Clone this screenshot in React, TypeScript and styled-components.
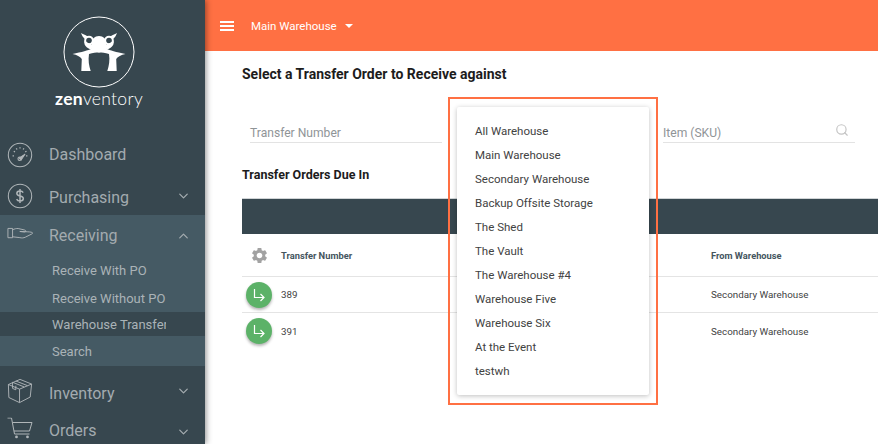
import React from "react";
import styled, { createGlobalStyle } from "styled-components";
import { ChevronDown, ChevronUp, Search } from "lucide-react";
import { MdSettings } from "react-icons/md";

const GlobalStyle = createGlobalStyle`
  html, body { margin: 0; height: 100%; overflow: hidden; background: #fff; }
  body { font-family: Roboto, "Liberation Sans", sans-serif; }
  * { box-sizing: border-box; }
`;

const Page = styled.div`
  position: relative;
  display: flex;
  width: 878px;
  height: 444px;
  overflow: hidden;
`;

const Sidebar = styled.aside`
  flex: 0 0 205px;
  height: 444px;
  background: #37474f;
  box-shadow: 1px 0 6px rgba(0, 0, 0, 0.45);
  z-index: 2;
  overflow: hidden;
`;

const Brand = styled.div`
  height: 133px;
  padding: 16px 7px 0 0;
  display: flex;
  flex-direction: column;
  align-items: center;
  color: #fff;
`;

const Wordmark = styled.div`
  font-family: Lato, sans-serif;
  font-size: 17.5px;
  line-height: 22px;
  font-weight: 300;
  letter-spacing: 0.3px;
  b { font-weight: 700; }
`;

const NavRow = styled.div<{ $h: number; $shift?: number }>`
  height: ${(p) => p.$h}px;
  display: flex;
  align-items: center;
  position: relative;
  padding-left: 49px;
  padding-top: ${(p) => Math.max(p.$shift || 0, 0)}px;
  padding-bottom: ${(p) => Math.max(-(p.$shift || 0), 0)}px;
  color: #a3abaf;
  font-size: 16px;
`;

const NavIcon = styled.span<{ $dy?: number }>`
  position: absolute;
  left: 7px;
  top: calc(50% + ${(p) => p.$dy || 0}px);
  transform: translateY(-50%);
  display: flex;
  color: #b0b6b9;
`;

const Chevron = styled.span`
  position: absolute;
  left: 176px;
  top: 50%;
  transform: translateY(-50%);
  display: flex;
  color: #a3abaf;
`;

const Group = styled.div`
  background: #455a64;
`;

const SubItem = styled.div<{ $active?: boolean; $h: number }>`
  height: ${(p) => p.$h}px;
  display: flex;
  align-items: center;
  padding-left: 52px;
  font-size: 13px;
  white-space: nowrap;
  overflow: hidden;
  width: 205px;
  color: #aab3b7;
  background: ${(p) => (p.$active ? "#37474f" : "transparent")};
`;

const Clip = styled.span`
  display: block;
  max-width: 114px;
  overflow: hidden;
`;

const Main = styled.main`
  flex: 1;
  min-width: 0;
  display: flex;
  flex-direction: column;
`;

const TopBar = styled.header`
  height: 51px;
  background: #ff7043;
  display: flex;
  align-items: center;
  padding-left: 15px;
  color: #fff;
  font-size: 11.5px;
`;

const Burger = styled.span`
  width: 14px;
  height: 10px;
  margin-right: 17px;
  border-top: 2px solid #fff;
  border-bottom: 2px solid #fff;
  position: relative;
  &::after {
    content: "";
    position: absolute;
    left: 0;
    right: 0;
    top: 2px;
    height: 2px;
    background: #fff;
  }
`;

const Caret = styled.span`
  margin-left: 8px;
  width: 0;
  height: 0;
  border-left: 4px solid transparent;
  border-right: 4px solid transparent;
  border-top: 4px solid #fff;
`;

const Content = styled.div`
  padding: 15px 0 0 37px;
`;

const Title = styled.h1`
  margin: 0;
  font-size: 14px;
  line-height: 17px;
  font-weight: 700;
  color: #1c1c1c;
`;

const Filters = styled.div`
  display: flex;
  justify-content: space-between;
  margin-top: 33px;
  padding: 0 23px 0 8px;
`;

const Field = styled.div`
  position: relative;
  width: 192px;
  height: 27px;
  padding-top: 9px;
  border-bottom: 1px solid #e3e3e3;
  font-size: 12.1px;
  line-height: 17px;
  color: #8f9497;
`;

const FieldIcon = styled.span`
  position: absolute;
  right: 6px;
  top: 7px;
  display: flex;
  color: #c4c4c4;
`;

const Subtitle = styled.h2`
  margin: 24px 0 0;
  font-size: 12.5px;
  line-height: 16px;
  font-weight: 700;
  color: #1c1c1c;
`;

const TableBar = styled.div`
  height: 36px;
  margin-top: 15px;
  background: #37474f;
  border-top: 1px solid #d0d4d6;
`;

const Row = styled.div<{ $h: number; $last?: boolean }>`
  display: grid;
  grid-template-columns: 39px 430px 1fr;
  align-items: center;
  height: ${(p) => p.$h}px;
  border-bottom: ${(p) => (p.$last ? "none" : "1px solid #e4e4e4")};
  font-size: 9.8px;
  color: #3f3f3f;
`;

const HeadCell = styled.span`
  font-size: 9.3px;
  font-weight: 700;
  color: #45555e;
`;

const GearCell = styled.span`
  display: flex;
  justify-content: center;
  padding-right: 5px;
  color: #a2a2a2;
`;

const ActionButton = styled.span`
  margin-left: 4px;
  width: 26px;
  height: 26px;
  border-radius: 50%;
  background: #5cb268;
  box-shadow: 0 2px 3px rgba(0, 0, 0, 0.3);
  display: flex;
  align-items: center;
  justify-content: center;
`;

const Highlight = styled.div`
  position: absolute;
  left: 448px;
  top: 97px;
  width: 210px;
  height: 308px;
  border: 2px solid #ff7043;
  padding: 8px 7px;
  z-index: 3;
`;

const Menu = styled.ul`
  list-style: none;
  margin: 0;
  padding: 12px 0 11px;
  height: 288px;
  background: #fff;
  border-radius: 2px;
  box-shadow: 0 1px 5px rgba(0, 0, 0, 0.25);
`;

const MenuItem = styled.li`
  height: 24px;
  line-height: 24px;
  padding-left: 18px;
  font-size: 11.5px;
  color: #424242;
`;

const GaugeIcon = () => (
  <svg width="26" height="26" viewBox="0 0 28 28" fill="none" stroke="currentColor" strokeWidth="1.1">
    <circle cx="14" cy="14" r="12.6" />
    <path d="M6 15h1.5M7.3 10l1.3.7M10 6.8l.8 1.3M14 5.6v1.5M18.2 6.8l-.8 1.3M21 10l-1.3.7M22 15h-1.5" strokeWidth="1.4" />
    <path d="M13 17.3l6.5-4.3-4.3 6.4z" fill="currentColor" />
    <circle cx="13.6" cy="18" r="1.8" />
  </svg>
);

const DollarIcon = () => (
  <svg width="26" height="26" viewBox="0 0 28 28" fill="none" stroke="currentColor" strokeWidth="1.1">
    <circle cx="14" cy="14" r="12.6" />
    <path d="M17.4 10.4c-.6-1.3-1.8-1.9-3.4-1.9-2 0-3.4 1-3.4 2.7 0 3.8 7 1.9 7 5.6 0 1.8-1.6 2.7-3.6 2.7-1.7 0-3-.7-3.6-2.1M14 6.4v15.2" strokeWidth="1.6" />
  </svg>
);

const HandIcon = () => (
  <svg width="26" height="14" viewBox="0 0 28 15" fill="none" stroke="currentColor" strokeWidth="1">
    <path d="M1 1.500h5v10H1zM6 3c2-1 4-1.600 6-1.400l7 1.600c1.800.4 1.500 2.300-.2 2.100l-5-.5 8 .3c5 .2 7.200 1 5 2.300l-7 3.500c-2 1-4 1-6 .5L6 10.500" />
  </svg>
);

const BoxIcon = () => (
  <svg width="26" height="26" viewBox="0 0 28 28" fill="none" stroke="currentColor" strokeWidth="1">
    <path d="M14 1.500L26.500 6.500 25 20.500 13.500 26.500 2 21 1.500 7zM1.500 7L13.500 12 26.500 6.500M13.500 12v14.500M6 4.600l12.500 5M9.500 3.200l12.500 5M6 4.800v6.400l3.500 1.500V8.300" />
  </svg>
);

const CartIcon = () => (
  <svg width="26" height="21" viewBox="0 0 26 21" fill="none" stroke="currentColor" strokeWidth="1">
    <path d="M.5 .5h4L7.500 16.500h15M5.500 5h19.500l-2.500 8.500H7" />
    <circle cx="9.500" cy="19.500" r="1.400" fill="currentColor" stroke="none" />
    <circle cx="20.500" cy="19.500" r="1.400" fill="currentColor" stroke="none" />
  </svg>
);

const ArrowIcon = () => (
  <svg width="14" height="14" viewBox="0 0 14 14" fill="none" stroke="#fff" strokeWidth="1.2">
    <path d="M2.500 1v8.500h9.500M8.500 6l3.500 3.500-3.500 3.500" />
  </svg>
);

const half = (
  <>
    <circle cx="109" cy="40.500" r="4.800" fill="#fff" />
    <circle cx="109" cy="40.500" r="2.800" fill="#37474f" />
    <path d="M117 33C114.500 34.500 112 35 110.500 36.500L113 39C115 37.500 116 35.500 117 33z" />
    <path d="M113.800 41C114 46 111 48 107 49.500L104 46z" />
    <path d="M99 36C103.500 36 106 39 106.300 43L107 50 99 52.500z" />
    <path d="M106 48.500C110 50.500 116 52 125.500 54 121 55 118 56.500 116.200 59L116.700 71 107.300 71C109 66 110 60 109 54 105 52.500 102 52.500 99 52.500L99 45z" />
  </>
);

const Logo = () => (
  <svg width="72" height="72" viewBox="63 16 72 72">
    <circle cx="99" cy="52" r="35" fill="none" stroke="#fff" strokeWidth="1" />
    <g fill="#fff">
      {half}
      <g transform="translate(198 0) scale(-1 1)">{half}</g>
    </g>
  </svg>
);

const warehouses = [
  "All Warehouse",
  "Main Warehouse",
  "Secondary Warehouse",
  "Backup Offsite Storage",
  "The Shed",
  "The Vault",
  "The Warehouse #4",
  "Warehouse Five",
  "Warehouse Six",
  "At the Event",
  "testwh",
];

const App: React.FC = () => {
  return (
    <Page>
      <GlobalStyle />
      <Sidebar>
        <Brand>
          <Logo />
          <Wordmark>
            <b>zen</b>ventory
          </Wordmark>
        </Brand>
        <NavRow $h={43}>
          <NavIcon><GaugeIcon /></NavIcon>
          Dashboard
        </NavRow>
        <NavRow $h={39} $shift={4}>
          <NavIcon><DollarIcon /></NavIcon>
          Purchasing
          <Chevron><ChevronDown size={15} /></Chevron>
        </NavRow>
        <Group>
          <NavRow $h={41}>
            <NavIcon $dy={-2}><HandIcon /></NavIcon>
            Receiving
            <Chevron><ChevronUp size={15} /></Chevron>
          </NavRow>
          <SubItem $h={28}>Receive With PO</SubItem>
          <SubItem $h={28}>Receive Without PO</SubItem>
          <SubItem $h={24} $active><Clip>Warehouse Transfer</Clip></SubItem>
          <SubItem $h={30}>Search</SubItem>
        </Group>
        <NavRow $h={50} $shift={4}>
          <NavIcon><BoxIcon /></NavIcon>
          Inventory
          <Chevron><ChevronDown size={15} /></Chevron>
        </NavRow>
        <NavRow $h={32} $shift={-4}>
          <NavIcon $dy={-4}><CartIcon /></NavIcon>
          Orders
          <Chevron><ChevronDown size={15} /></Chevron>
        </NavRow>
      </Sidebar>
      <Main>
        <TopBar>
          <Burger />
          Main Warehouse
          <Caret />
        </TopBar>
        <Content>
          <Title>Select a Transfer Order to Receive against</Title>
          <Filters>
            <Field>Transfer Number</Field>
            <Field>
              Item (SKU)
              <FieldIcon><Search size={14} strokeWidth={2} /></FieldIcon>
            </Field>
          </Filters>
          <Subtitle>Transfer Orders Due In</Subtitle>
          <TableBar />
          <Row $h={43}>
            <GearCell><MdSettings size={19} /></GearCell>
            <HeadCell>Transfer Number</HeadCell>
            <HeadCell>From Warehouse</HeadCell>
          </Row>
          <Row $h={36}>
            <ActionButton><ArrowIcon /></ActionButton>
            <span>389</span>
            <span>Secondary Warehouse</span>
          </Row>
          <Row $h={36} $last>
            <ActionButton><ArrowIcon /></ActionButton>
            <span>391</span>
            <span>Secondary Warehouse</span>
          </Row>
        </Content>
      </Main>
      <Highlight>
        <Menu>
          {warehouses.map((name) => (
            <MenuItem key={name}>{name}</MenuItem>
          ))}
        </Menu>
      </Highlight>
    </Page>
  );
};

export default App;
